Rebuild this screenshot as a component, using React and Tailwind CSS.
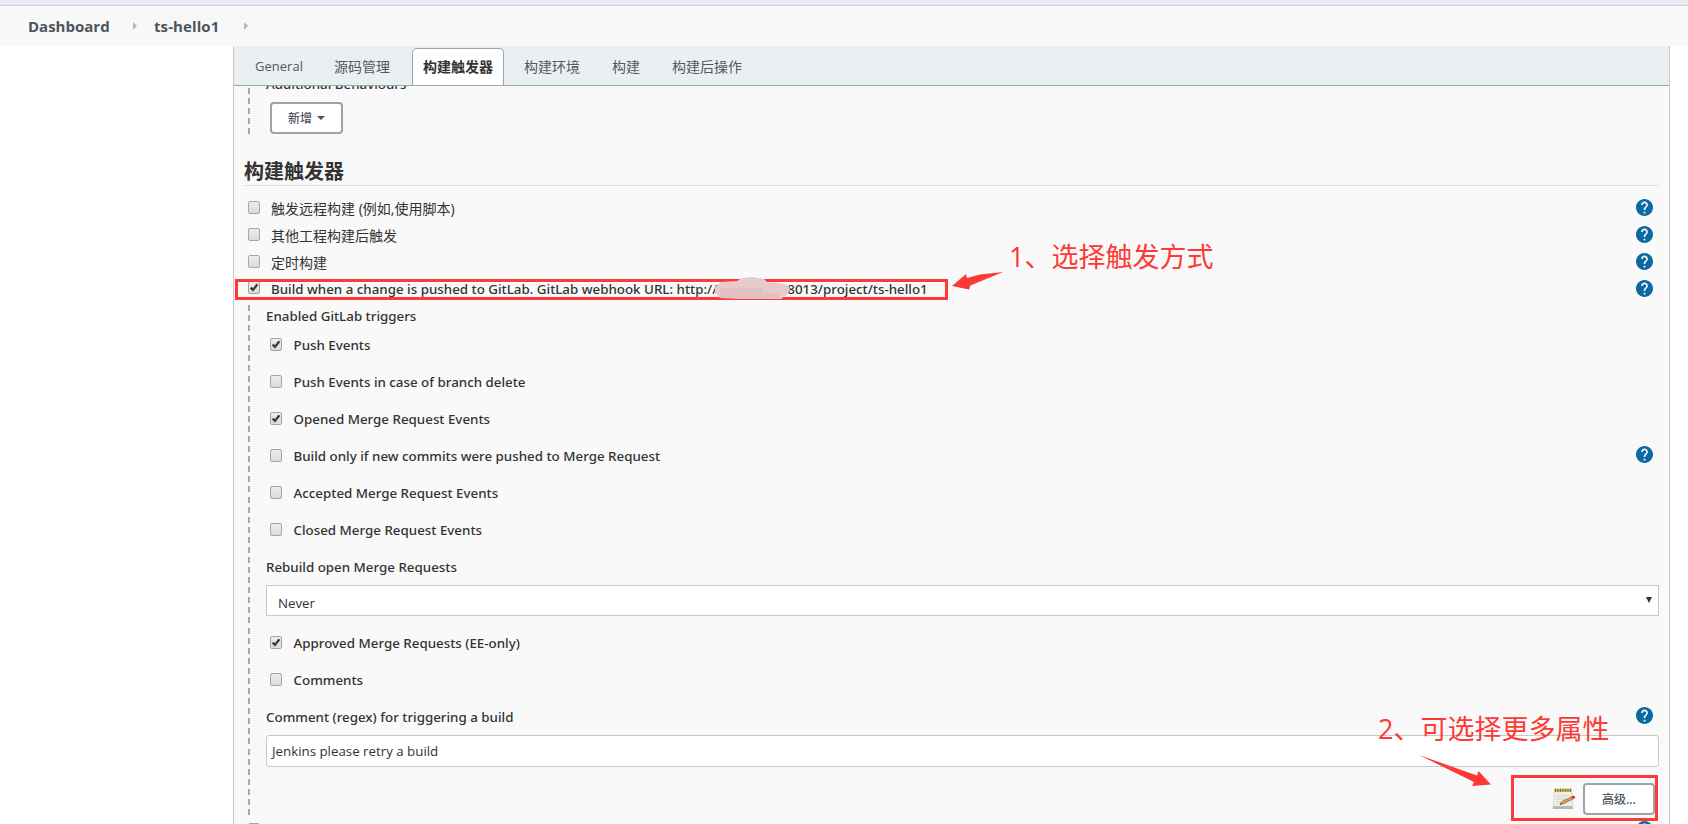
import clsx from "clsx";

const TABS = [
  { label: "General", className: "w-[78px] text-[13px]" },
  { label: "源码管理", className: "mr-[6px] w-[88px]" },
  { label: "构建触发器", active: true },
  { label: "构建环境", className: "ml-1 w-[88px]" },
  { label: "构建", className: "w-[60px]" },
  { label: "构建后操作", className: "w-[102px]" },
];

const EVENTS = [
  { label: "Push Events", checked: true },
  { label: "Push Events in case of branch delete" },
  { label: "Opened Merge Request Events", checked: true },
  { label: "Build only if new commits were pushed to Merge Request", help: true },
  { label: "Accepted Merge Request Events" },
  { label: "Closed Merge Request Events" },
];

const Checkbox = ({ checked, className }) => (
  <span
    className={clsx(
      "block h-[13px] w-[12px] shrink-0 rounded-[2px] border border-[#a6a6a6] bg-linear-to-b from-[#ededed] to-[#dadada]",
      className
    )}
  >
    {checked && (
      <svg viewBox="0 0 10 11" className="h-[11px] w-[10px]">
        <path d="M1.6 5.6 4 7.900 8.400 2.300" fill="none" stroke="#3c3c3c" strokeWidth="2.3" />
      </svg>
    )}
  </span>
);

const Help = ({ className }) => (
  <svg viewBox="2 2 20 20" className={clsx("h-[17px] w-[17px] shrink-0", className)}>
    <path
      fill="#0b6aa2"
      d="M12 2C6.48 2 2 6.48 2 12s4.48 10 10 10 10-4.48 10-10S17.52 2 12 2zm1 17h-2v-2h2v2zm2.07-7.75-.9.92C13.45 12.9 13 13.5 13 15h-2v-.5c0-1.1.45-2.1 1.17-2.83l1.24-1.26c.37-.36.59-.86.59-1.41 0-1.1-.9-2-2-2s-2 .9-2 2H8c0-2.21 1.79-4 4-4s4 1.79 4 4c0 .88-.36 1.68-.93 2.25z"
    />
  </svg>
);

const Separator = () => <span className="h-0 w-0 border-y-4 border-l-4 border-y-transparent border-l-[#b5b5b5]" />;

const TriggerRow = ({ children, checked, className }) => (
  <div className={clsx("flex shrink-0 items-center pr-[6px] pl-1", className)}>
    <Checkbox checked={checked} className="-mt-[3px]" />
    <span className="ml-[11px] grow">{children}</span>
    <Help className="-mt-[2px]" />
  </div>
);

const EventRow = ({ label, checked, help }) => (
  <div className="flex h-[37px] items-center pr-[6px] pl-1">
    <Checkbox checked={checked} />
    <span className="ml-[11.5px] grow pt-[2px]">{label}</span>
    {help && <Help className="-mt-[2px]" />}
  </div>
);

const Notepad = () => (
  <svg viewBox="0 0 24 24" className="h-6 w-6">
    <path d="M2.500 3h17l1 17.500h-19z" fill="#efefea" />
    <path d="M1.500 19h19l.3 3H.7z" fill="#b9b9b2" />
    <path d="M2.500 3 1 21.500M19.500 3l1.300 18.500" stroke="#c4c4bd" strokeWidth=".7" />
    <path d="M2.500 2h17v3h-17z" fill="#c9b75a" />
    <path d="M3.500 1.500v3M6 1.500v3M8.500 1.500v3M11 1.500v3M13.500 1.500v3M16 1.500v3M18.500 1.500v3" stroke="#7b6a20" />
    <path d="M4 9h12M4 12h10M4 15h5" stroke="#cfcfcb" />
    <path d="m8 17.500 2-3 10-5 1.500 2.200-10 5z" fill="#e2a048" stroke="#7a4e1b" strokeWidth=".6" />
    <path d="m19.500 9.500 2.500-1 1.500 2.200-2.500 1.200z" fill="#cf3b35" />
    <path d="m8 17.500.8-1.300.9.900z" fill="#222" />
  </svg>
);

const App = () => {
  return (
    <div className="relative flex h-[824px] w-[1688px] flex-col overflow-hidden bg-white font-['Open_Sans','Noto_Sans_CJK_SC',sans-serif] text-[14px] text-[#333]">
      <div className="h-[6px] shrink-0 border-b border-[#cfcfdc] bg-[#e9e9f3]" />
      <header className="flex h-10 shrink-0 items-center bg-[#f8f8f8] pl-7 text-[15px] font-bold text-[#4d545d]">
        <span className="w-[105px]">Dashboard</span>
        <Separator />
        <span className="ml-[17px] w-[90px] tracking-[0.1px]">ts-hello1</span>
        <Separator />
      </header>

      <main className="ml-[233px] flex w-[1437px] grow flex-col border-x border-[#c8c8c8] bg-[#f9f9f9]">
        <nav className="flex h-10 shrink-0 items-end border-b border-[#98a7b0] bg-[#eaeff2] pl-[6px] text-[#545862]">
          {TABS.map(({ label, active, className }) => (
            <span
              key={label}
              className={clsx(
                "flex h-[37px] items-center justify-center whitespace-nowrap",
                active && "w-[92px] rounded-t-[5px] border border-b-0 border-[#98a7b0] bg-white pb-px font-bold text-[#333]",
                className
              )}
            >
              {label}
            </span>
          ))}
        </nav>

        <div className="flex h-[738px] flex-col overflow-hidden pr-[10px] pl-[10px] font-['Noto_Sans','Noto_Sans_CJK_SC',sans-serif] text-[13.35px] font-medium">
          <div className="ml-1 h-12 shrink-0 bg-[repeating-linear-gradient(to_bottom,transparent_0_2px,#a9a9a9_2px_8px,transparent_8px_10px)] bg-[length:2px_100%] bg-no-repeat pl-[18px]">
            <p className="-mt-[12px] h-5 leading-5">Additional Behaviours</p>
            <button className="mt-[8px] ml-1 flex h-8 w-[73px] items-center justify-center gap-[5px] rounded-[4px] border-2 border-[#98a5ae] bg-white text-[12px] font-medium text-[#4d545d]">
              <span className="pt-px">新增</span>
              <span className="h-0 w-0 border-x-4 border-t-4 border-x-transparent border-t-[#4d545d]" />
            </button>
          </div>

          <h2 className="mt-[22px] h-[30px] shrink-0 border-b border-[#dedede] text-[20px] leading-[32px] font-bold">构建触发器</h2>

          <TriggerRow className="mt-[9px] h-[27px] text-[14px] font-normal">触发远程构建 (例如,使用脚本)</TriggerRow>
          <TriggerRow className="h-[27px] text-[14px] font-normal">其他工程构建后触发</TriggerRow>
          <TriggerRow className="h-[27px] text-[14px] font-normal">定时构建</TriggerRow>
          <TriggerRow checked className="h-[26px]">
            Build when a change is pushed to GitLab. GitLab webhook URL: http://
            <span className="inline-block w-[70px]" />
            8013/project/ts-hello1
          </TriggerRow>

          <section className="mt-[3px] ml-1 h-[510px] shrink-0 bg-[repeating-linear-gradient(to_bottom,#a9a9a9_0_6px,transparent_6px_10.08px)] bg-[length:2px_100%] bg-no-repeat pl-[18px]">
            <p className="h-[21px] leading-[22px]">Enabled GitLab triggers</p>
            {EVENTS.map((event) => (
              <EventRow key={event.label} {...event} />
            ))}
            <p className="h-[37px] leading-[38px]">Rebuild open Merge Requests</p>
            <div className="flex h-[31px] items-center justify-between border border-[#c8c8c8] bg-white pt-[5px] pr-[6px] pl-[11px] font-['Open_Sans'] text-[13.3px] font-normal">
              <span className="pt-px">Never</span>
              <span className="mb-[6px] h-0 w-0 border-x-[3px] border-t-[6px] border-x-transparent border-t-[#333]" />
            </div>
            <div className="mt-[8px]">
              <EventRow label="Approved Merge Requests (EE-only)" checked />
              <EventRow label="Comments" />
            </div>
            <div className="flex h-[37px] items-center justify-between pr-[6px]">
              <span className="pt-px">Comment (regex) for triggering a build</span>
              <Help className="-mt-[2px]" />
            </div>
            <div className="flex h-8 items-center rounded-[3px] border border-[#c8c8c8] bg-white pt-px pl-[5px] font-['Open_Sans'] text-[13.3px] font-normal">
              Jenkins please retry a build
            </div>
            <div className="mt-4 flex items-center justify-end pr-1">
              <Notepad />
              <button className="ml-[7px] h-8 w-[72px] rounded-[4px] border-2 border-[#98a5ae] bg-white pt-[2px] text-[12px] font-medium text-[#4d545d]">
                高级...
              </button>
            </div>
          </section>

          <div className="mt-[6px] flex shrink-0 justify-between pr-[6px] pl-1">
            <Checkbox className="mt-[2px]" />
            <Help />
          </div>
        </div>
      </main>

      {/* annotations over the form */}
      <div className="absolute top-[279px] left-[235px] h-[21px] w-[713px] border-3 border-[#fd3a36]" />
      <svg viewBox="0 0 75 23" className="absolute top-[277px] left-[715px] h-[23px] w-[75px]">
        <path d="M0 10 6 5l16-1 5-3 10-1 12 2 3 3 13 1 8 2 2 4-2 5-7 5H25l-20-1-5-5z" fill="#e8cacc" />
        <path d="M5 11h20v10H5zM25 11h23v11H25zM48 16h16v5H48z" fill="#e1c0c4" />
      </svg>
      <svg viewBox="0 0 52 18" className="absolute top-[272px] left-[952px] h-[18px] w-[52px]">
        <path d="M51 0 28 2.500 15 6l-1-4L0 14l17 3.500 1.500-4z" fill="#fd3a36" />
      </svg>
      <div className="absolute top-[237px] left-[1009px] text-[27px] leading-10 whitespace-nowrap text-[#fd3a36]">1、选择触发方式</div>
      <div className="absolute top-[709px] left-[1378px] text-[27px] leading-10 whitespace-nowrap text-[#fd3a36]">2、可选择更多属性</div>
      <svg viewBox="0 0 72 32" className="absolute top-[755px] left-[1419px] h-8 w-[72px]">
        <path d="M0 0 58 20.500l1.500-4.500L72 29.500 53 31l2-4z" fill="#fd3a36" />
      </svg>
      <div className="absolute top-[775px] left-[1511px] h-[46px] w-[147px] border-3 border-[#fd3a36]" />
    </div>
  );
};

export default App;
